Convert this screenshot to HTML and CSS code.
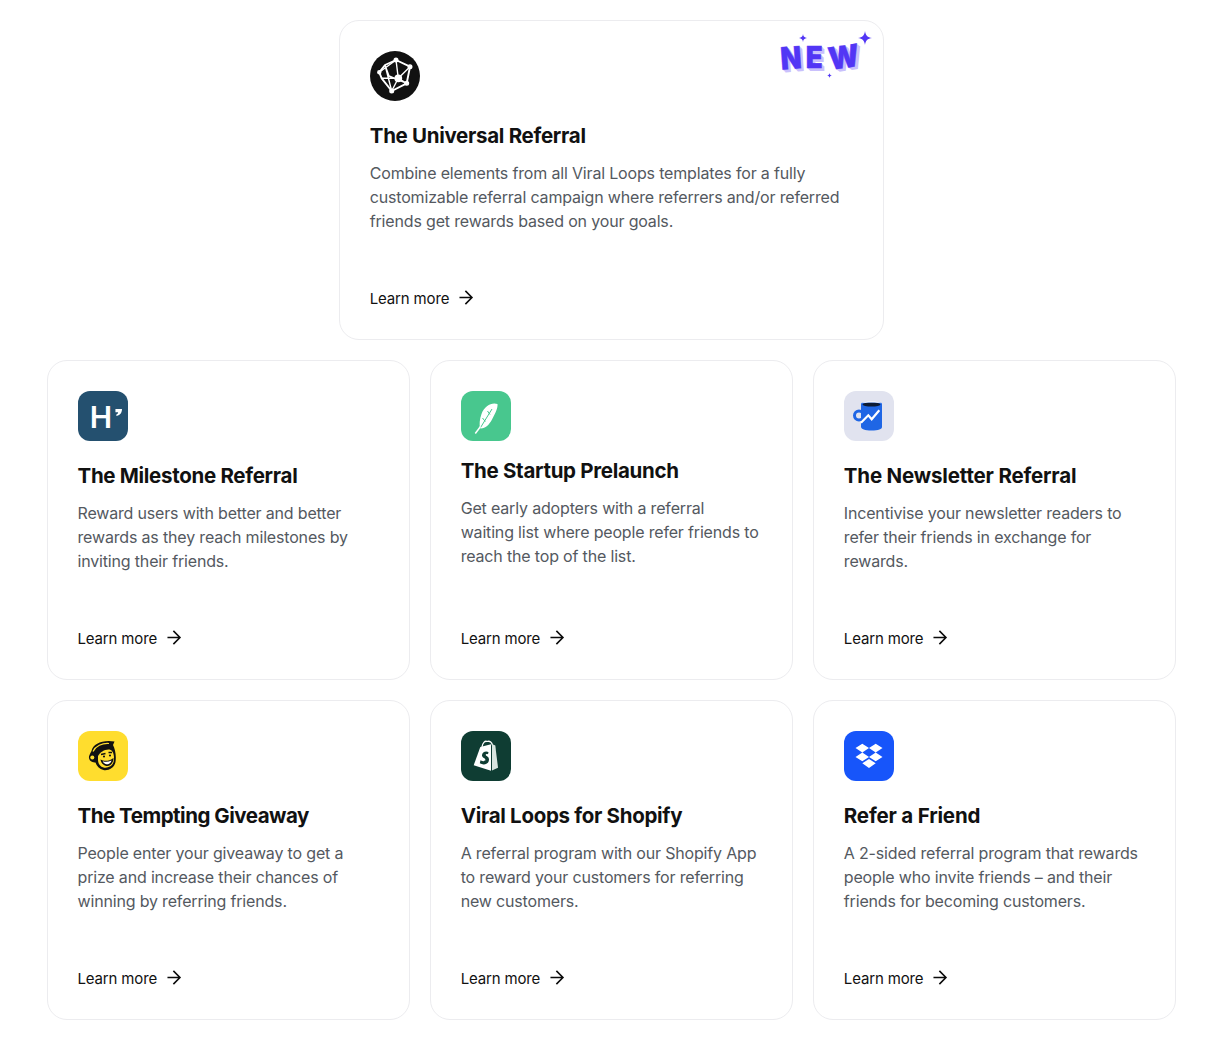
FILE: index.html
```html
<!DOCTYPE html>
<html lang="en">
<head>
<meta charset="utf-8">
<title>Viral Loops templates</title>
<link rel="stylesheet" href="styles.css">
</head>
<body>
<main class="page">
  <div class="featured-row">
    <article class="card card-featured">
      <div class="new-badge">
        <svg class="spark spark-a" viewBox="0 0 16 16"><path d="M8 0C8.600 5 11 7.400 16 8 11 8.600 8.600 11 8 16 7.400 11 5 8.600 0 8 5 7.400 7.400 5 8 0Z"/></svg>
        <svg class="spark spark-b" viewBox="0 0 16 16"><path d="M8 0C8.600 5 11 7.400 16 8 11 8.600 8.600 11 8 16 7.400 11 5 8.600 0 8 5 7.400 7.400 5 8 0Z"/></svg>
        <svg class="spark spark-c" viewBox="0 0 16 16"><path d="M8 0C8.600 5 11 7.400 16 8 11 8.600 8.600 11 8 16 7.400 11 5 8.600 0 8 5 7.400 7.400 5 8 0Z"/></svg>
        <span class="new-n">N</span><span class="new-e">E</span><span class="new-w">W</span>
      </div>
      <div class="icon icon-round">
        <svg viewBox="0 0 50 50" fill="none" stroke="#fff" stroke-width="1.400" stroke-linejoin="round"><path d="M26 9 40 15.700 36.700 32.300 21.700 40 11.700 27.300 9.300 21.300 15 14Z" stroke-width="1.900"/><path d="M26 9 28.300 27.300 40 15.700M28.300 27.300 36.700 32.300M28.300 27.300 21.700 40M28.300 27.300 11.700 27.300M26 9 9.300 21.300M15 14 21.700 40M15 14 19 25 36.700 32.300"/><circle cx="26" cy="9" r="1.800" fill="#fff"/><circle cx="40" cy="15.700" r="1.800" fill="#fff"/><circle cx="28.300" cy="27.300" r="3.200" fill="#fff"/><circle cx="36.700" cy="32.300" r="1.800" fill="#fff"/><circle cx="21.700" cy="40" r="1.800" fill="#fff"/><circle cx="9.300" cy="21.300" r="1.500" fill="#fff"/></svg>
      </div>
      <h2 class="title">The Universal Referral</h2>
      <p class="desc">Combine elements from all Viral Loops templates for a fully customizable referral campaign where referrers and/or referred friends get rewards based on your goals.</p>
      <a class="more" href="#">Learn more <svg class="arrow" viewBox="0 0 16 16" fill="none" stroke="#0b0b0b" stroke-width="1.700"><path d="M.5 8H13.500M6.800 1 13.800 8 6.800 15"/></svg></a>
    </article>
  </div>
  <div class="grid">
    <article class="card">
      <div class="icon icon-h"><span class="h-mark">H</span><svg class="h-tick" viewBox="0 0 8 8"><path d="M.5 0H8C8 3.800 6.300 7 1.800 8L1.300 6.500C2.800 5.900 3.500 5 3.600 3.800H.5Z" fill="#fff"/></svg></div>
      <h2 class="title">The Milestone Referral</h2>
      <p class="desc">Reward users with better and better rewards as they reach milestones by inviting their friends.</p>
      <a class="more" href="#">Learn more <svg class="arrow" viewBox="0 0 16 16" fill="none" stroke="#0b0b0b" stroke-width="1.700"><path d="M.5 8H13.500M6.800 1 13.800 8 6.800 15"/></svg></a>
    </article>
    <article class="card card-tight">
      <div class="icon icon-feather">
        <svg viewBox="0 0 50 50"><path d="M36.500 13C31 11 23.500 14.500 20.500 23 18.500 28.500 18.300 33 19 37.500 24 38 28 34 31 28.500 34.300 22.500 37 17 36.500 13Z" fill="#fff"/><path d="M31 18 18 39M21.500 27 24.300 30.500M26.500 20 29 23.500" stroke="#48c78e" stroke-width="1" fill="none"/><path d="M19.500 35.500 14.300 42.500" stroke="#fff" stroke-width="1.500"/></svg>
      </div>
      <h2 class="title">The Startup Prelaunch</h2>
      <p class="desc">Get early adopters with a referral waiting list where people refer friends to reach the top of the list.</p>
      <a class="more" href="#">Learn more <svg class="arrow" viewBox="0 0 16 16" fill="none" stroke="#0b0b0b" stroke-width="1.700"><path d="M.5 8H13.500M6.800 1 13.800 8 6.800 15"/></svg></a>
    </article>
    <article class="card">
      <div class="icon icon-mug">
        <svg viewBox="0 0 50 50"><circle cx="15" cy="24.500" r="4.500" fill="none" stroke="#1f66e5" stroke-width="3"/><path d="M17 12.500C17 10.500 38 10.500 38 12.500V36C38 38 34.500 39.500 27.500 39.500S17.500 38 17 36Z" fill="#1f66e5"/><ellipse cx="27.500" cy="13.500" rx="9" ry="2" fill="#0d1b33"/><path d="M17 12.300C21 10 34 10 38 12.300 33 11.300 22 11.300 17 12.300Z" fill="#fff"/><path d="M17 31.700 24.300 24.300 27.700 28.300 35.300 19.300" fill="none" stroke="#fff" stroke-width="2.200"/></svg>
      </div>
      <h2 class="title t-wide">The Newsletter Referral</h2>
      <p class="desc">Incentivise your newsletter readers to refer their friends in exchange for rewards.</p>
      <a class="more" href="#">Learn more <svg class="arrow" viewBox="0 0 16 16" fill="none" stroke="#0b0b0b" stroke-width="1.700"><path d="M.5 8H13.500M6.800 1 13.800 8 6.800 15"/></svg></a>
    </article>
    <article class="card">
      <div class="icon icon-chimp">
        <svg viewBox="0 0 50 50"><path d="M13.500 20C15 12.500 25 8.500 36.500 10.500L35 14C37 18 38.500 24 37.500 31 36.500 37 30 40 25.500 39 21.500 38 18.500 35 17.500 31.500 13 32 9.500 28 11.500 24 12 22.500 12.800 21.500 13.500 20Z" fill="#111"/><path d="M15 20.500C17.500 15 24 12 31 12.500" fill="none" stroke="#ffdd2e" stroke-width="1.200"/><path d="M20 25C22 21 27 18 31.500 18.500 35.500 19.500 36.500 25 35.800 30 35 35 29.500 37.500 25.500 36.500 21.500 35.500 20 32 20 29Z" fill="#ffdd2e"/><path d="M22.500 28.500C26 30.500 31 30.500 35.500 27 35.500 32 32 35.500 28.500 35 25 34.500 23 31.500 22.500 28.500Z" fill="#111"/><path d="M24.800 30.200C27.500 31.300 30.500 31 33.500 29.500 33 32 30.500 33.500 28.500 33.300 26.800 33 25.500 32 24.800 30.200Z" fill="#fff"/><path d="M23 23.500 27.500 22.500M30.500 21.500 34 21.500" stroke="#111" stroke-width="1.500"/><circle cx="26" cy="25.500" r="1.100" fill="#111"/><circle cx="32" cy="24.500" r="1.100" fill="#111"/><circle cx="14.300" cy="26.500" r="2" fill="#ffdd2e"/></svg>
      </div>
      <h2 class="title t-tight">The Tempting Giveaway</h2>
      <p class="desc">People enter your giveaway to get a prize and increase their chances of winning by referring friends.</p>
      <a class="more" href="#">Learn more <svg class="arrow" viewBox="0 0 16 16" fill="none" stroke="#0b0b0b" stroke-width="1.700"><path d="M.5 8H13.500M6.800 1 13.800 8 6.800 15"/></svg></a>
    </article>
    <article class="card">
      <div class="icon icon-shopify">
        <svg viewBox="0 0 50 50"><path d="M21 16C21.500 12 24 9.500 26 10.500 29 9.500 31 11.500 31.500 14.500" fill="none" stroke="#fff" stroke-width="1.300"/><path d="M19.300 16 30 13.300 30 39.800 12.700 34.300Z" fill="#fff"/><path d="M31 13 34.300 14.500 37 36.800 31 39.500Z" fill="#d9e5e0"/><path d="M27.500 21C24.500 19.500 20.800 21.300 21 24.500 21.200 27 24.500 27 24.400 29 24.300 30.600 21.500 30.500 19.500 29.200L18.800 32.300C22 34.300 27.800 33.800 28 28.700 28.200 25.500 24.800 25.200 24.700 23.800 24.600 22.800 26 22.800 27 23.300Z" fill="#0f3d33"/></svg>
      </div>
      <h2 class="title">Viral Loops for Shopify</h2>
      <p class="desc">A referral program with our Shopify App to reward your customers for referring new customers.</p>
      <a class="more" href="#">Learn more <svg class="arrow" viewBox="0 0 16 16" fill="none" stroke="#0b0b0b" stroke-width="1.700"><path d="M.5 8H13.500M6.800 1 13.800 8 6.800 15"/></svg></a>
    </article>
    <article class="card">
      <div class="icon icon-dropbox">
        <svg viewBox="0 0 50 50" fill="#fff"><path d="M18.300 12.700 25 17 18.300 21.500 11.500 17ZM31.700 12.700 38.500 17 31.700 21.500 25 17ZM11.500 26 18.300 21.500 25 26 18.300 30.300ZM31.700 21.500 38.500 26 31.700 30.300 25 26ZM18.300 32.200 25 27.900 31.700 32.200 25 37Z"/></svg>
      </div>
      <h2 class="title t-wide">Refer a Friend</h2>
      <p class="desc">A 2-sided referral program that rewards people who invite friends – and their friends for becoming customers.</p>
      <a class="more" href="#">Learn more <svg class="arrow" viewBox="0 0 16 16" fill="none" stroke="#0b0b0b" stroke-width="1.700"><path d="M.5 8H13.500M6.800 1 13.800 8 6.800 15"/></svg></a>
    </article>
  </div>
</main>
</body>
</html>
```

FILE: styles.css
```css
* { box-sizing: border-box; }
html, body { margin: 0; background: #fff; }
body { font-family: Inter, "Liberation Sans", sans-serif; color: #111; }
.page { width: 1215px; padding: 20px 39px 30px 46.5px; display: flex; flex-direction: column; gap: 20px; }
.featured-row { display: flex; justify-content: center; }
.grid { display: grid; grid-template-columns: repeat(3, 1fr); gap: 20px; }
.card {
  position: relative;
  height: 320px;
  display: flex;
  flex-direction: column;
  align-items: flex-start;
  padding: 30px;
  border: 1px solid #ececef;
  border-radius: 20px;
  background: #fff;
}
.card-featured { width: 545px; }
.icon { position: relative; width: 50px; height: 50px; border-radius: 12px; overflow: hidden; flex: none; display: flex; align-items: center; justify-content: center; }
.icon svg { width: 50px; height: 50px; display: block; }
.icon-round { border-radius: 50%; background: #111; }
.icon-h { background: #24506f; color: #fff; font-weight: 600; }
.h-mark { font-size: 30px; line-height: 1; margin-top: 1px; margin-left: -3px; }
.icon .h-tick { position: absolute; left: 37px; top: 18px; width: 7px; height: 7px; }
.icon-feather { background: #48c78e; }
.icon-mug { background: #e1e3ef; }
.icon-chimp { background: #ffdd2e; }
.icon-shopify { background: #0f3d33; }
.icon-dropbox { background: #1755fa; }
.title { margin: 22px 0 0; font-size: 20.5px; line-height: 26px; font-weight: 700; letter-spacing: -0.3px; color: #111; }
.t-wide { letter-spacing: -0.18px; }
.t-tight { letter-spacing: -0.48px; }
.card-tight .title { margin-top: 17px; }
.desc { margin: 12px 0 0; font-size: 16px; line-height: 24px; color: #54595f; letter-spacing: -0.17px; }
.grid .desc { max-width: 300px; }
.more { margin-top: auto; display: inline-flex; align-items: center; gap: 10px; font-size: 15px; line-height: 20px; letter-spacing: -0.15px; color: #111; text-decoration: none; }
.arrow { width: 15px; height: 15px; display: block; margin-top: -4px; }
.new-badge { position: absolute; left: 440px; top: 14px; width: 96px; height: 44px; font-size: 31px; line-height: 1; font-weight: 900; color: #5236f5; }
.new-badge span { position: absolute; -webkit-text-stroke: .4px #5236f5; text-shadow: 1px 1px 0 #c9c0fc, 2px 2px 0 #c9c0fc, 3px 3px 0 #c9c0fc; }
.new-n { left: -1px; top: 7px; transform: rotate(-4deg) scaleX(.88); }
.new-e { left: 25px; top: 7px; font-size: 30px; transform: scaleX(.92); }
.new-w { left: 47px; top: 6px; transform: rotate(-8deg) scaleX(.92); }
.spark { position: absolute; fill: #5236f5; }
.spark-a { width: 14px; height: 14px; left: 78.3px; top: -3.7px; }
.spark-b { width: 8px; height: 8px; left: 19.3px; top: -.7px; }
.spark-c { width: 5px; height: 5px; left: 47.5px; top: 37.5px; }
```
